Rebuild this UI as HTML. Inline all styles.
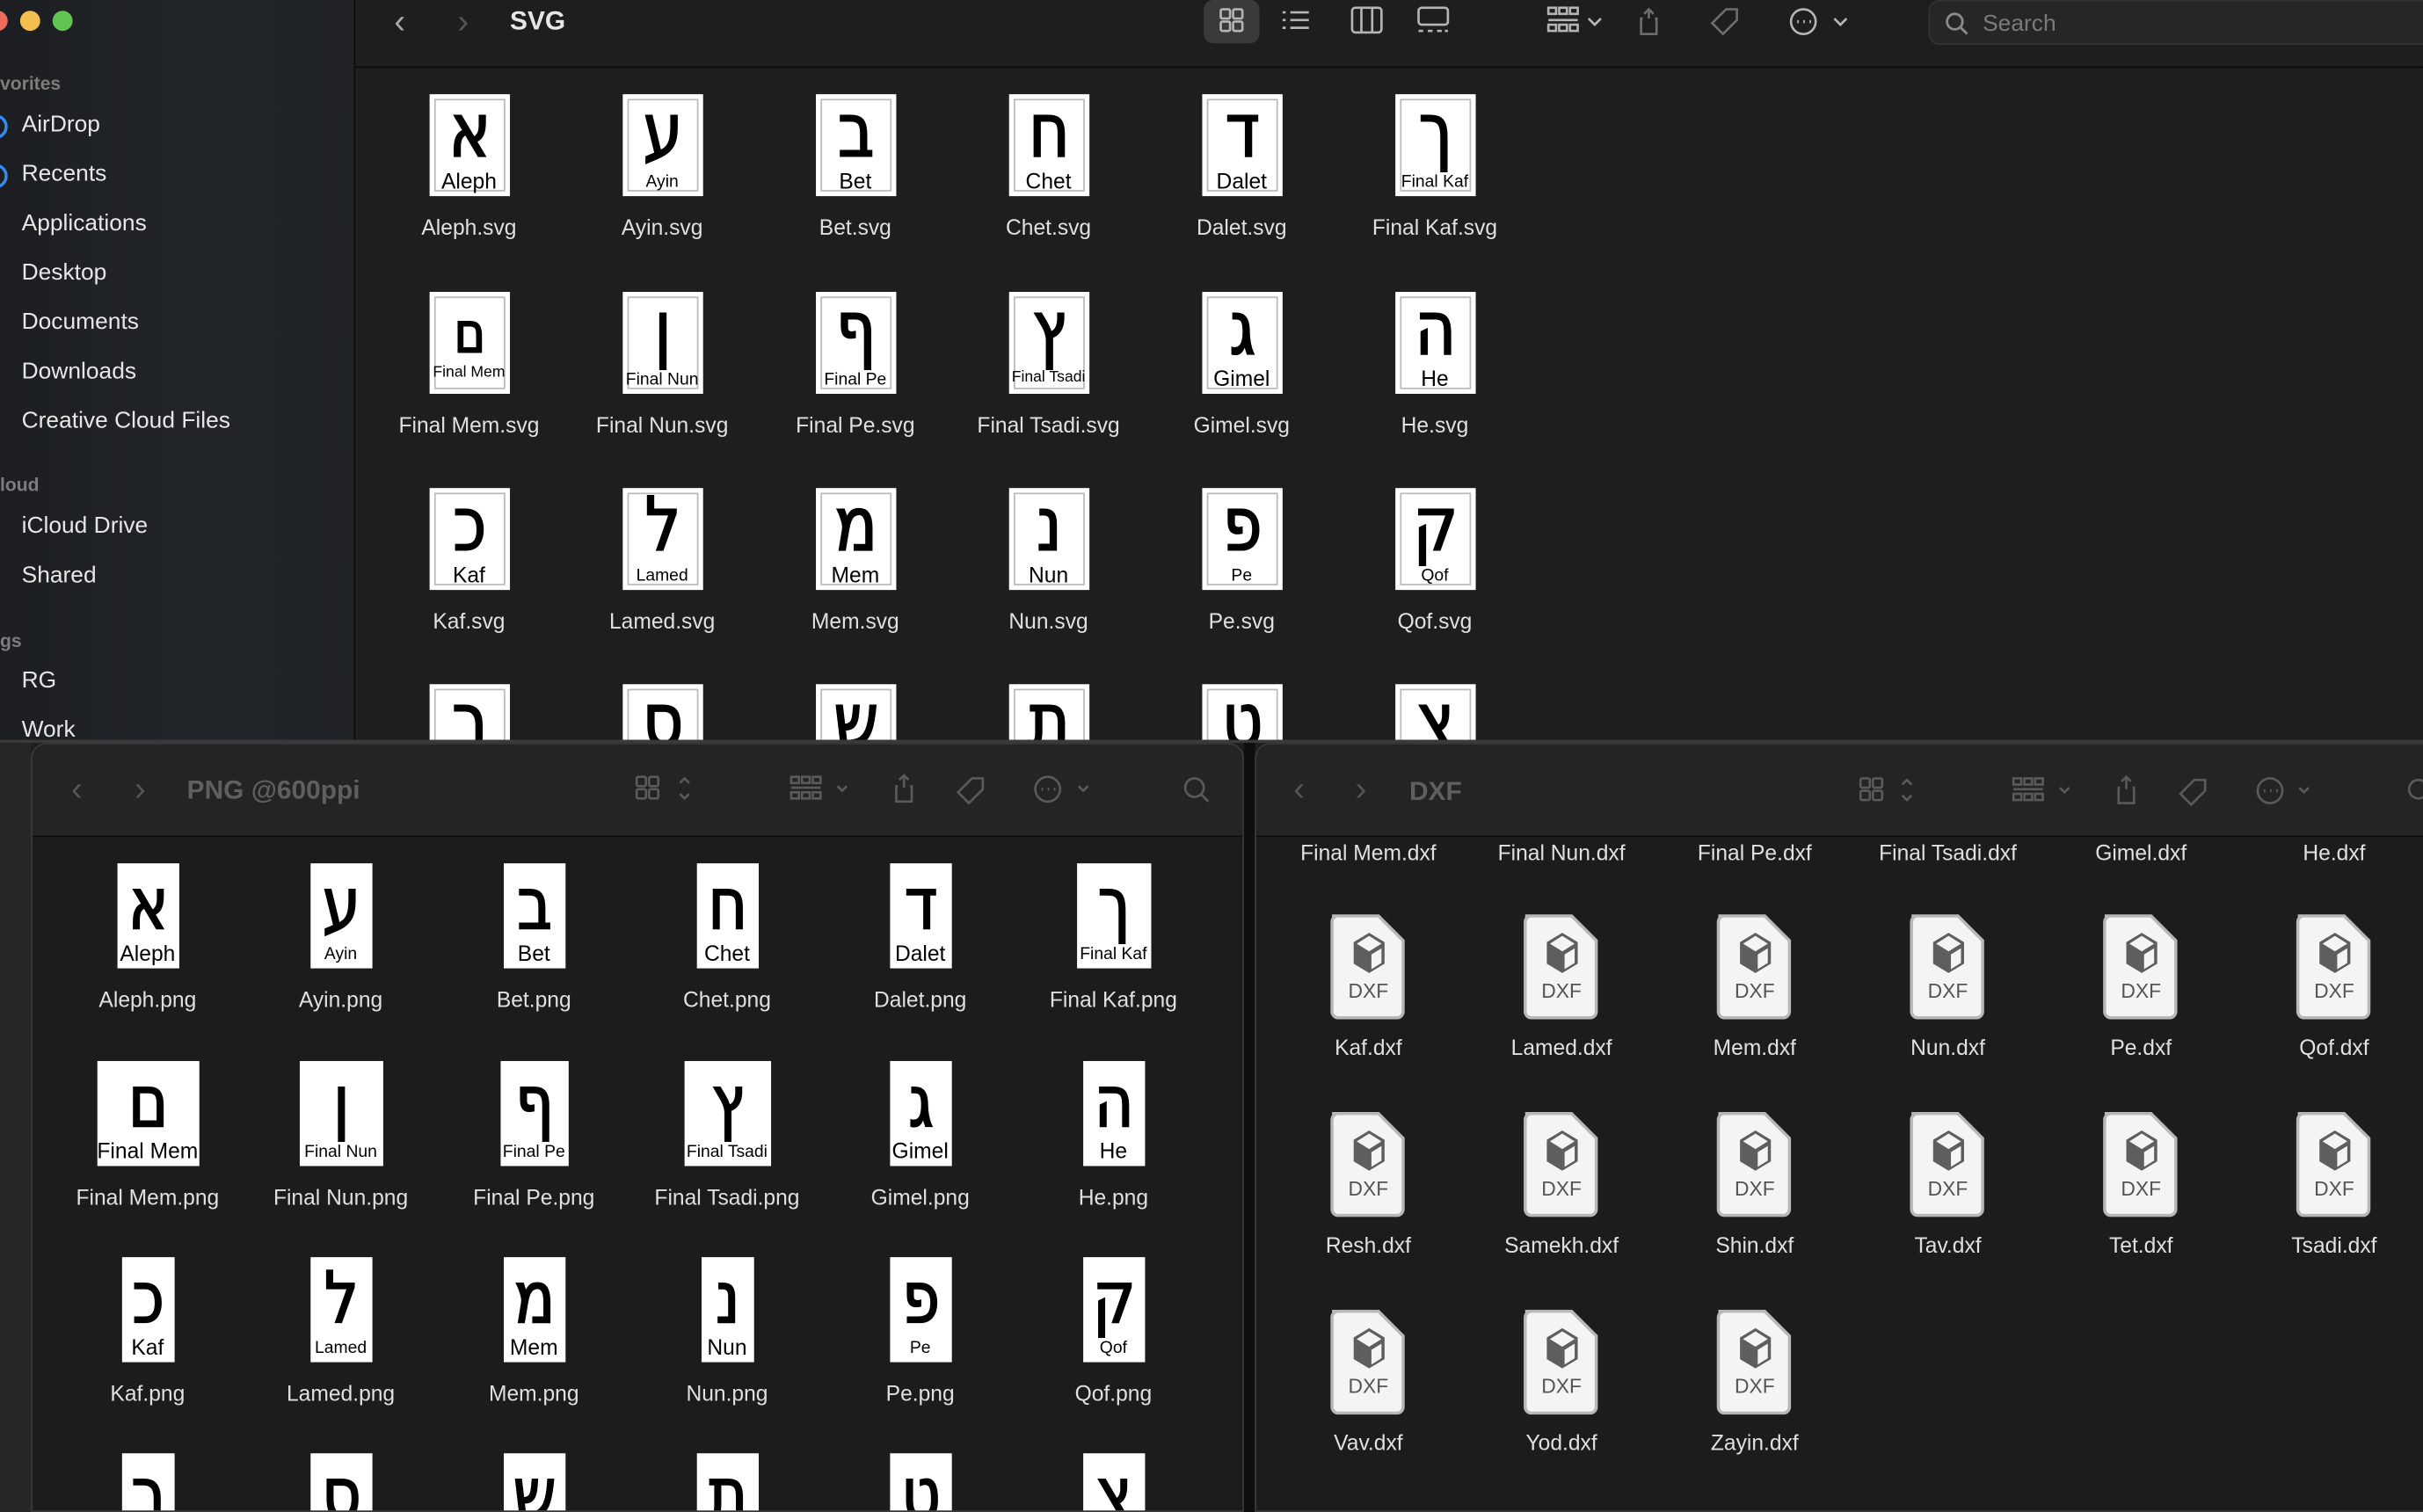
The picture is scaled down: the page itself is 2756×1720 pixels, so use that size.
<!DOCTYPE html>
<html><head><meta charset="utf-8">
<style>
*{margin:0;padding:0;box-sizing:border-box}
html,body{width:2756px;height:1720px;overflow:hidden;background:#1e1e1e}
#s{position:absolute;left:0;top:0;width:1568px;height:979px;transform:scale(1.75765,1.75689);transform-origin:0 0;font-family:"Liberation Sans",sans-serif;background:#1e1e1e;overflow:hidden}
.a{position:absolute}
.side{left:0;top:0;width:230px;height:480px;background:linear-gradient(90deg,#1c1e21,#22262b 60%,#1f2226);border-right:1px solid #0c0c0c}
.si{position:absolute;left:14px;color:#e6e6e6;font-size:15px}
.sh{position:absolute;left:0;color:#7d7d7d;font-size:12px;font-weight:bold}
.dot{position:absolute;border-radius:50%;width:13px;height:13px;top:7px}
.c{position:absolute;width:125px;text-align:center}
.t{margin:0 auto;background:#fff;width:52px;height:66px;position:relative;overflow:hidden}
.t .in{position:absolute;left:3px;top:3px;right:3px;bottom:3px;border:1px solid #bbb}
.t .L{position:absolute;left:0;right:0;top:-6px;font:48px/60px "DejaVu Sans",sans-serif;color:#000;text-align:center;transform:scaleX(0.85);-webkit-text-stroke:1.2px #000}
.t .S{position:absolute;left:0;right:0;bottom:2px;font-size:14px;color:#000;text-align:center}
.t .S.sm{font-size:11px;bottom:3px}
.n{color:#e0e0e0;font-size:14px;margin-top:12px;white-space:nowrap}
.p .t{width:40px;height:68px}
.p .t .in{display:none}
.p .t .L{font-size:46px;top:-4px}
.p .n{margin-top:12px}
.d{margin:0 auto;width:56px;height:68px;position:relative}
.d .n2{position:absolute;left:0;right:0;top:42px;text-align:center;font-size:13px;color:#555}
.ic{position:absolute;color:#9a9a9a;font-size:18px}
.dim{color:#555}
</style></head><body><div id="s">

<!-- TOP WINDOW -->
<div class="a side">
  <div class="sh" style="top:47px">vorites</div>
  <div class="a" style="left:-4px;top:74px;width:9px;height:16px;border:2px solid #2f8cf7;border-left:none;border-radius:0 8px 8px 0"></div>
  <div class="si" style="top:72px">AirDrop</div>
  <div class="a" style="left:-4px;top:106px;width:9px;height:16px;border:2px solid #2f8cf7;border-left:none;border-radius:0 8px 8px 0"></div>
  <div class="si" style="top:104px">Recents</div>
  <div class="si" style="top:136px">Applications</div>
  <div class="si" style="top:168px">Desktop</div>
  <div class="si" style="top:200px">Documents</div>
  <div class="si" style="top:232px">Downloads</div>
  <div class="si" style="top:264px">Creative Cloud Files</div>
  <div class="sh" style="top:307px">loud</div>
  <div class="si" style="top:332px">iCloud Drive</div>
  <div class="si" style="top:364px">Shared</div>
  <div class="sh" style="top:408px">gs</div>
  <div class="si" style="top:432px">RG</div>
  <div class="si" style="top:464px">Work</div>
</div>
<div class="a" style="left:0;top:0;width:60px;height:26px">
  <div class="dot" style="left:-8px;background:#ed6a5e"></div>
  <div class="dot" style="left:13px;background:#f5bf4f"></div>
  <div class="dot" style="left:34px;background:#61c554"></div>
</div>
<div class="a" style="left:230px;top:0;width:1338px;height:44px;background:#1e1e1e;border-bottom:1px solid #0a0a0a">
  <div class="ic" style="left:25px;top:1px;font-size:22px;color:#aaa">&#x2039;</div>
  <div class="ic" style="left:66px;top:1px;font-size:22px;color:#555">&#x203A;</div>
  <div class="a" style="left:100px;top:4px;color:#e6e6e6;font-size:17px;font-weight:bold">SVG</div>
  <div class="a" style="left:549px;top:0;width:36px;height:28px;background:#3a3a3a;border-radius:6px"></div>
  <svg class="a" style="left:555px;top:3px" width="400" height="24" fill="none" stroke="#b5b5b5" stroke-width="1.5">
    <rect x="5" y="3" width="6" height="6" rx="1"/><rect x="13" y="3" width="6" height="6" rx="1"/><rect x="5" y="11" width="6" height="6" rx="1"/><rect x="13" y="11" width="6" height="6" rx="1"/>
    <path d="M45 5h2M50 5h12M45 10h2M50 10h12M45 15h2M50 15h12"/>
    <rect x="90" y="2" width="19" height="16" rx="2"/><path d="M96 2v16M103 2v16"/>
    <rect x="133" y="2" width="19" height="11" rx="2"/><path d="M133 17h3M139 17h3M145 17h3M150 17h2"/>
    <rect x="217" y="2" width="5" height="4"/><rect x="224" y="2" width="5" height="4"/><rect x="231" y="2" width="5" height="4"/><path d="M217 10h19"/><rect x="217" y="13" width="5" height="4"/><rect x="224" y="13" width="5" height="4"/><rect x="231" y="13" width="5" height="4"/>
    <path d="M243 9l4 4 4-4"/>
    <path d="M282 9v-6M279 6l3-3 3 3M278 9h-1v10h10v-10h-1" stroke="#6d6d6d"/>
    <path d="M323 12l9-9h7v7l-9 9z" stroke="#6d6d6d"/>
    <circle cx="382" cy="11" r="8"/><path d="M378 11h1M382 11h1M386 11h1" stroke-width="2"/>
  </svg>
  <svg class="a" style="left:955px;top:3px" width="20" height="24" fill="none" stroke="#b5b5b5" stroke-width="1.5"><path d="M2 9l4 4 4-4"/></svg>
  <div class="a" style="left:1018px;top:0;width:330px;height:29px;background:#262626;border:1px solid #333;border-radius:7px">
    <svg class="a" style="left:9px;top:6px" width="18" height="18" fill="none" stroke="#8a8a8a" stroke-width="1.6"><circle cx="7" cy="7" r="5"/><path d="M11 11l4 4"/></svg>
    <div class="a" style="left:34px;top:6px;color:#7a7a7a;font-size:15px">Search</div>
  </div>
</div>
<div class="a" style="left:230px;top:45px;width:1338px;height:435px;overflow:hidden">
  <div class="a" style="left:0;top:0;width:1338px;height:435px">
<div class="c" style="left:11px;top:16px"><div class="t"><div class="in"></div><div class="L">א</div><div class="S">Aleph</div></div><div class="n">Aleph.svg</div></div>
<div class="c" style="left:136px;top:16px"><div class="t"><div class="in"></div><div class="L">ע</div><div class="S sm">Ayin</div></div><div class="n">Ayin.svg</div></div>
<div class="c" style="left:261px;top:16px"><div class="t"><div class="in"></div><div class="L">ב</div><div class="S">Bet</div></div><div class="n">Bet.svg</div></div>
<div class="c" style="left:386px;top:16px"><div class="t"><div class="in"></div><div class="L">ח</div><div class="S">Chet</div></div><div class="n">Chet.svg</div></div>
<div class="c" style="left:511px;top:16px"><div class="t"><div class="in"></div><div class="L">ד</div><div class="S">Dalet</div></div><div class="n">Dalet.svg</div></div>
<div class="c" style="left:636px;top:16px"><div class="t"><div class="in"></div><div class="L">ך</div><div class="S sm">Final Kaf</div></div><div class="n">Final Kaf.svg</div></div>

<div class="c" style="left:11px;top:144px"><div class="t"><div class="in"></div><div class="L" style="font-size:36px;top:-2px">ם</div><div class="S sm" style="font-size:10px;bottom:8px">Final Mem</div></div><div class="n">Final Mem.svg</div></div>
<div class="c" style="left:136px;top:144px"><div class="t"><div class="in"></div><div class="L">ן</div><div class="S sm">Final Nun</div></div><div class="n">Final Nun.svg</div></div>
<div class="c" style="left:261px;top:144px"><div class="t"><div class="in"></div><div class="L">ף</div><div class="S sm">Final Pe</div></div><div class="n">Final Pe.svg</div></div>
<div class="c" style="left:386px;top:144px"><div class="t"><div class="in"></div><div class="L">ץ</div><div class="S sm" style="font-size:10px;bottom:5px">Final Tsadi</div></div><div class="n">Final Tsadi.svg</div></div>
<div class="c" style="left:511px;top:144px"><div class="t"><div class="in"></div><div class="L">ג</div><div class="S">Gimel</div></div><div class="n">Gimel.svg</div></div>
<div class="c" style="left:636px;top:144px"><div class="t"><div class="in"></div><div class="L">ה</div><div class="S">He</div></div><div class="n">He.svg</div></div>

<div class="c" style="left:11px;top:271px"><div class="t"><div class="in"></div><div class="L">כ</div><div class="S">Kaf</div></div><div class="n">Kaf.svg</div></div>
<div class="c" style="left:136px;top:271px"><div class="t"><div class="in"></div><div class="L">ל</div><div class="S sm">Lamed</div></div><div class="n">Lamed.svg</div></div>
<div class="c" style="left:261px;top:271px"><div class="t"><div class="in"></div><div class="L">מ</div><div class="S">Mem</div></div><div class="n">Mem.svg</div></div>
<div class="c" style="left:386px;top:271px"><div class="t"><div class="in"></div><div class="L">נ</div><div class="S">Nun</div></div><div class="n">Nun.svg</div></div>
<div class="c" style="left:511px;top:271px"><div class="t"><div class="in"></div><div class="L">פ</div><div class="S sm">Pe</div></div><div class="n">Pe.svg</div></div>
<div class="c" style="left:636px;top:271px"><div class="t"><div class="in"></div><div class="L">ק</div><div class="S sm">Qof</div></div><div class="n">Qof.svg</div></div>

<div class="c" style="left:11px;top:398px"><div class="t"><div class="in"></div><div class="L">ר</div></div></div>
<div class="c" style="left:136px;top:398px"><div class="t"><div class="in"></div><div class="L">ס</div></div></div>
<div class="c" style="left:261px;top:398px"><div class="t"><div class="in"></div><div class="L">ש</div></div></div>
<div class="c" style="left:386px;top:398px"><div class="t"><div class="in"></div><div class="L">ת</div></div></div>
<div class="c" style="left:511px;top:398px"><div class="t"><div class="in"></div><div class="L">ט</div></div></div>
<div class="c" style="left:636px;top:398px"><div class="t"><div class="in"></div><div class="L">צ</div></div></div>
  </div>
</div>
<div class="a" style="left:0;top:479px;width:1568px;height:2px;background:#3a3a3a"></div>

<div class="a" style="left:0;top:481px;width:20px;height:498px;background:#262626"></div>
<div class="a" style="left:805px;top:481px;width:7px;height:498px;background:#0e0e0e"></div>

<!-- BOTTOM LEFT WINDOW -->
<div class="a" style="left:20px;top:481px;width:785px;height:498px;background:#1c1c1c;border:1px solid #3a3a3a;border-radius:10px 10px 0 0;overflow:hidden">
  <div class="a" style="left:0;top:0;width:785px;height:60px;background:#242424;border-bottom:1px solid #0e0e0e"></div>
  <div class="ic dim" style="left:25px;top:16px;font-size:22px">&#x2039;</div>
  <div class="ic dim" style="left:66px;top:16px;font-size:22px">&#x203A;</div>
  <div class="a" style="left:100px;top:20px;color:#5f5f5f;font-size:17px;font-weight:bold">PNG @600ppi</div>
  <svg class="a" style="left:390px;top:18px" width="390" height="26" fill="none" stroke="#5a5a5a" stroke-width="1.5">
    <rect x="1" y="3" width="6" height="6" rx="1"/><rect x="9" y="3" width="6" height="6" rx="1"/><rect x="1" y="11" width="6" height="6" rx="1"/><rect x="9" y="11" width="6" height="6" rx="1"/>
    <path d="M29 7l3-3 3 3M29 14l3 3 3-3"/>
    <rect x="101" y="3" width="5" height="4"/><rect x="108" y="3" width="5" height="4"/><rect x="115" y="3" width="5" height="4"/><path d="M101 10h19"/><rect x="101" y="13" width="5" height="4"/><rect x="108" y="13" width="5" height="4"/><rect x="115" y="13" width="5" height="4"/>
    <path d="M131 9l3 3 3-3"/>
    <path d="M174 10v-8M171 5l3-3 3 3M170 9h-1v10h10v-10h-1"/>
    <path d="M209 13l9-9h7v7l-9 9z"/>
    <circle cx="267" cy="11" r="8"/><path d="M263 11h1M267 11h1M271 11h1" stroke-width="2"/><path d="M287 9l3 3 3-3"/>
    <circle cx="362" cy="10" r="6"/><path d="M366 14l5 5"/>
  </svg>
  <div class="c p" style="left:12px;top:77px"><div class="t"><div class="L">א</div><div class="S">Aleph</div></div><div class="n">Aleph.png</div></div>
  <div class="c p" style="left:137px;top:77px"><div class="t"><div class="L">ע</div><div class="S sm">Ayin</div></div><div class="n">Ayin.png</div></div>
  <div class="c p" style="left:262px;top:77px"><div class="t"><div class="L">ב</div><div class="S">Bet</div></div><div class="n">Bet.png</div></div>
  <div class="c p" style="left:387px;top:77px"><div class="t"><div class="L">ח</div><div class="S">Chet</div></div><div class="n">Chet.png</div></div>
  <div class="c p" style="left:512px;top:77px"><div class="t"><div class="L">ד</div><div class="S">Dalet</div></div><div class="n">Dalet.png</div></div>
  <div class="c p" style="left:637px;top:77px"><div class="t" style="width:48px"><div class="L">ך</div><div class="S sm">Final Kaf</div></div><div class="n">Final Kaf.png</div></div>

  <div class="c p" style="left:12px;top:205px"><div class="t" style="width:66px"><div class="L">ם</div><div class="S">Final Mem</div></div><div class="n">Final Mem.png</div></div>
  <div class="c p" style="left:137px;top:205px"><div class="t" style="width:54px"><div class="L">ן</div><div class="S sm">Final Nun</div></div><div class="n">Final Nun.png</div></div>
  <div class="c p" style="left:262px;top:205px"><div class="t" style="width:44px"><div class="L">ף</div><div class="S sm">Final Pe</div></div><div class="n">Final Pe.png</div></div>
  <div class="c p" style="left:387px;top:205px"><div class="t" style="width:56px"><div class="L">ץ</div><div class="S sm">Final Tsadi</div></div><div class="n">Final Tsadi.png</div></div>
  <div class="c p" style="left:512px;top:205px"><div class="t"><div class="L">ג</div><div class="S">Gimel</div></div><div class="n">Gimel.png</div></div>
  <div class="c p" style="left:637px;top:205px"><div class="t"><div class="L">ה</div><div class="S">He</div></div><div class="n">He.png</div></div>

  <div class="c p" style="left:12px;top:332px"><div class="t" style="width:34px"><div class="L">כ</div><div class="S">Kaf</div></div><div class="n">Kaf.png</div></div>
  <div class="c p" style="left:137px;top:332px"><div class="t"><div class="L">ל</div><div class="S sm">Lamed</div></div><div class="n">Lamed.png</div></div>
  <div class="c p" style="left:262px;top:332px"><div class="t"><div class="L">מ</div><div class="S">Mem</div></div><div class="n">Mem.png</div></div>
  <div class="c p" style="left:387px;top:332px"><div class="t" style="width:34px"><div class="L">נ</div><div class="S">Nun</div></div><div class="n">Nun.png</div></div>
  <div class="c p" style="left:512px;top:332px"><div class="t"><div class="L">פ</div><div class="S sm">Pe</div></div><div class="n">Pe.png</div></div>
  <div class="c p" style="left:637px;top:332px"><div class="t"><div class="L">ק</div><div class="S sm">Qof</div></div><div class="n">Qof.png</div></div>

  <div class="c p" style="left:12px;top:459px"><div class="t" style="width:34px"><div class="L">ר</div></div></div>
  <div class="c p" style="left:137px;top:459px"><div class="t"><div class="L">ס</div></div></div>
  <div class="c p" style="left:262px;top:459px"><div class="t"><div class="L">ש</div></div></div>
  <div class="c p" style="left:387px;top:459px"><div class="t"><div class="L">ת</div></div></div>
  <div class="c p" style="left:512px;top:459px"><div class="t"><div class="L">ט</div></div></div>
  <div class="c p" style="left:637px;top:459px"><div class="t"><div class="L">צ</div></div></div>
</div>

<!-- BOTTOM RIGHT WINDOW -->
<svg width="0" height="0" style="position:absolute"><defs>
<symbol id="dxf" viewBox="0 0 56 68">
<path d="M4 1h30l16 16v46a4 4 0 0 1-4 4H8a4 4 0 0 1-4-4V5a4 4 0 0 1 4-4z" fill="#f4f4f4" stroke="#b8b8b8" stroke-width="2"/>
<path d="M28 12l-10 6v14l10 6 10-6V18z" fill="#5e5e5e"/>
<path d="M28 14l-8 5 8 5 8-5z" fill="#f4f4f4"/>
<path d="M29.5 26l6.5-4v9.5l-6.5 4z" fill="#f4f4f4"/>
</symbol></defs></svg>
<div class="a" style="left:812px;top:481px;width:760px;height:498px;background:#1c1c1c;border:1px solid #3a3a3a;border-radius:10px 0 0 0;overflow:hidden">
  <div class="a" style="left:0;top:0;width:760px;height:60px;background:#242424;border-bottom:1px solid #0e0e0e"></div>
  <div class="ic dim" style="left:24px;top:16px;font-size:22px">&#x2039;</div>
  <div class="ic dim" style="left:64px;top:16px;font-size:22px">&#x203A;</div>
  <div class="a" style="left:99px;top:21px;color:#5f5f5f;font-size:17px;font-weight:bold">DXF</div>
  <svg class="a" style="left:390px;top:19px" width="370" height="26" fill="none" stroke="#5a5a5a" stroke-width="1.5">
    <rect x="1" y="3" width="6" height="6" rx="1"/><rect x="9" y="3" width="6" height="6" rx="1"/><rect x="1" y="11" width="6" height="6" rx="1"/><rect x="9" y="11" width="6" height="6" rx="1"/>
    <path d="M28 7l3-3 3 3M28 14l3 3 3-3"/>
    <rect x="100" y="3" width="5" height="4"/><rect x="107" y="3" width="5" height="4"/><rect x="114" y="3" width="5" height="4"/><path d="M100 10h19"/><rect x="100" y="13" width="5" height="4"/><rect x="107" y="13" width="5" height="4"/><rect x="114" y="13" width="5" height="4"/>
    <path d="M130 9l3 3 3-3"/>
    <path d="M173 10v-8M170 5l3-3 3 3M169 9h-1v10h10v-10h-1"/>
    <path d="M208 13l9-9h7v7l-9 9z"/>
    <circle cx="266" cy="11" r="8"/><path d="M262 11h1M266 11h1M270 11h1" stroke-width="2"/><path d="M285 9l3 3 3-3"/>
    <circle cx="362" cy="10" r="6"/>
  </svg>
  <div class="c" style="left:10px;top:50px"><div class="n">Final Mem.dxf</div></div>
  <div class="c" style="left:135px;top:50px"><div class="n">Final Nun.dxf</div></div>
  <div class="c" style="left:260px;top:50px"><div class="n">Final Pe.dxf</div></div>
  <div class="c" style="left:385px;top:50px"><div class="n">Final Tsadi.dxf</div></div>
  <div class="c" style="left:510px;top:50px"><div class="n">Gimel.dxf</div></div>
  <div class="c" style="left:635px;top:50px"><div class="n">He.dxf</div></div>

  <div class="c" style="left:10px;top:110px"><div class="d"><svg width="56" height="68"><use href="#dxf"/></svg><div class="n2">DXF</div></div><div class="n" style="margin-top:10px">Kaf.dxf</div></div>
  <div class="c" style="left:135px;top:110px"><div class="d"><svg width="56" height="68"><use href="#dxf"/></svg><div class="n2">DXF</div></div><div class="n" style="margin-top:10px">Lamed.dxf</div></div>
  <div class="c" style="left:260px;top:110px"><div class="d"><svg width="56" height="68"><use href="#dxf"/></svg><div class="n2">DXF</div></div><div class="n" style="margin-top:10px">Mem.dxf</div></div>
  <div class="c" style="left:385px;top:110px"><div class="d"><svg width="56" height="68"><use href="#dxf"/></svg><div class="n2">DXF</div></div><div class="n" style="margin-top:10px">Nun.dxf</div></div>
  <div class="c" style="left:510px;top:110px"><div class="d"><svg width="56" height="68"><use href="#dxf"/></svg><div class="n2">DXF</div></div><div class="n" style="margin-top:10px">Pe.dxf</div></div>
  <div class="c" style="left:635px;top:110px"><div class="d"><svg width="56" height="68"><use href="#dxf"/></svg><div class="n2">DXF</div></div><div class="n" style="margin-top:10px">Qof.dxf</div></div>

  <div class="c" style="left:10px;top:238px"><div class="d"><svg width="56" height="68"><use href="#dxf"/></svg><div class="n2">DXF</div></div><div class="n" style="margin-top:10px">Resh.dxf</div></div>
  <div class="c" style="left:135px;top:238px"><div class="d"><svg width="56" height="68"><use href="#dxf"/></svg><div class="n2">DXF</div></div><div class="n" style="margin-top:10px">Samekh.dxf</div></div>
  <div class="c" style="left:260px;top:238px"><div class="d"><svg width="56" height="68"><use href="#dxf"/></svg><div class="n2">DXF</div></div><div class="n" style="margin-top:10px">Shin.dxf</div></div>
  <div class="c" style="left:385px;top:238px"><div class="d"><svg width="56" height="68"><use href="#dxf"/></svg><div class="n2">DXF</div></div><div class="n" style="margin-top:10px">Tav.dxf</div></div>
  <div class="c" style="left:510px;top:238px"><div class="d"><svg width="56" height="68"><use href="#dxf"/></svg><div class="n2">DXF</div></div><div class="n" style="margin-top:10px">Tet.dxf</div></div>
  <div class="c" style="left:635px;top:238px"><div class="d"><svg width="56" height="68"><use href="#dxf"/></svg><div class="n2">DXF</div></div><div class="n" style="margin-top:10px">Tsadi.dxf</div></div>

  <div class="c" style="left:10px;top:366px"><div class="d"><svg width="56" height="68"><use href="#dxf"/></svg><div class="n2">DXF</div></div><div class="n" style="margin-top:10px">Vav.dxf</div></div>
  <div class="c" style="left:135px;top:366px"><div class="d"><svg width="56" height="68"><use href="#dxf"/></svg><div class="n2">DXF</div></div><div class="n" style="margin-top:10px">Yod.dxf</div></div>
  <div class="c" style="left:260px;top:366px"><div class="d"><svg width="56" height="68"><use href="#dxf"/></svg><div class="n2">DXF</div></div><div class="n" style="margin-top:10px">Zayin.dxf</div></div>
</div>

</div></body></html>
